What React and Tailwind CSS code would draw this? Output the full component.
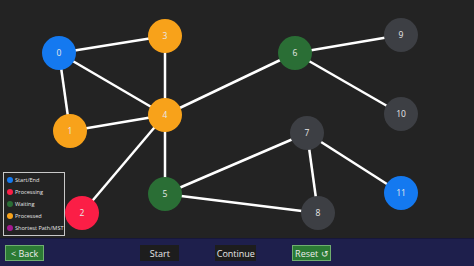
import React from 'react'

const nodes = [
  { id: 0, x: 59, y: 53, c: '#1479f0' },
  { id: 1, x: 70, y: 131, c: '#f8a21a' },
  { id: 2, x: 82, y: 213, c: '#fb1e46' },
  { id: 3, x: 165, y: 36, c: '#f8a21a' },
  { id: 4, x: 165, y: 115, c: '#f8a21a' },
  { id: 5, x: 165, y: 194, c: '#2a6e35' },
  { id: 6, x: 295, y: 53, c: '#2a6e35' },
  { id: 7, x: 307, y: 133, c: '#3d3f44' },
  { id: 8, x: 318, y: 213, c: '#3d3f44' },
  { id: 9, x: 401, y: 35, c: '#3d3f44' },
  { id: 10, x: 401, y: 114, c: '#3d3f44' },
  { id: 11, x: 401, y: 193, c: '#1479f0' },
]

const edges = [
  [0, 3], [0, 1], [0, 4], [3, 4], [1, 4], [4, 6], [4, 2], [4, 5],
  [5, 7], [5, 8], [7, 8], [7, 11], [6, 9], [6, 10],
]

const legend = [
  ['#1479f0', 'Start/End'],
  ['#fb1e46', 'Processing'],
  ['#2a6e35', 'Waiting'],
  ['#f8a21a', 'Processed'],
  ['#a5198f', 'Shortest Path/MST'],
]

export default function App() {
  return (
    <div className="w-[474px] h-[266px] flex flex-col bg-[#232323] overflow-hidden"
      style={{ fontFamily: '"Open Sans", "Noto Sans", sans-serif' }}>
      {/* Graph canvas */}
      <div className="relative flex-1">
        <svg width="474" height="238" className="absolute left-0 top-0">
          {edges.map(([a, b]) => (
            <line key={`${a}-${b}`} x1={nodes[a].x} y1={nodes[a].y} x2={nodes[b].x} y2={nodes[b].y}
              stroke="#ffffff" strokeWidth="2.5" />
          ))}
          {nodes.map(n => (
            <g key={n.id}>
              <circle cx={n.x} cy={n.y} r="17" fill={n.c} />
              <text x={n.x} y={n.y + 3} textAnchor="middle" fontSize="8.5" fill="#e8e8e8"
                fontFamily='"Open Sans", sans-serif'>{n.id}</text>
            </g>
          ))}
        </svg>

        {/* Legend */}
        <div className="absolute left-[3px] bottom-[2px] w-[62px] h-[64px] border border-[#c8c8c8] bg-[#232323] flex flex-col justify-center gap-[3px] pl-[3px]">
          {legend.map(([c, label]) => (
            <div key={label} className="flex items-center gap-[2px]">
              <span className="w-[6px] h-[6px] rounded-full" style={{ background: c }} />
              <span className="text-[5.6px] leading-[9px] text-[#e6e6e6] whitespace-nowrap">{label}</span>
            </div>
          ))}
        </div>
      </div>

      {/* Bottom bar */}
      <div className="h-[28px] bg-[#1e1f4c] border-t border-[#17173a] flex items-center pl-[5px] pt-[1px]">
        <button className="h-[16px] px-[5px] bg-[#2b7a34] border border-[#6fae6f] text-[9px] text-[#eaeaea] leading-none">
          &lt; Back
        </button>
        <div className="flex items-center gap-[36px] ml-[96px]">
          <button className="h-[16px] w-[39px] bg-[#1d1d1d] text-[9px] text-[#eaeaea] leading-none">
            Start
          </button>
          <button className="h-[16px] w-[41px] bg-[#1d1d1d] text-[9px] text-[#eaeaea] leading-none">
            Continue
          </button>
          <button className="h-[16px] w-[39px] bg-[#2b7a34] border border-[#6fae6f] text-[9px] text-[#eaeaea] leading-none">
            Reset ↺
          </button>
        </div>
      </div>
    </div>
  )
}
